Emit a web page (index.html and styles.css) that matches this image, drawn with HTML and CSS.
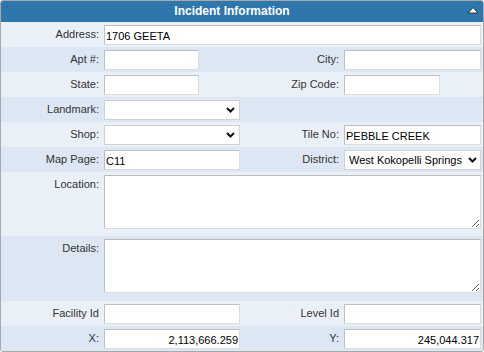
FILE: index.html
```html
<!DOCTYPE html>
<html>
<head>
<meta charset="utf-8">
<link rel="stylesheet" href="styles.css">
</head>
<body>
<div class="panel">
  <div class="header">
    <span class="title">Incident Information</span>
    <svg class="collapse" width="12" height="8" viewBox="0 0 12 8"><polygon points="1,7 6,1.5 11,7" fill="#fff" stroke="#333" stroke-width="1" stroke-linejoin="round"/></svg>
  </div>

  <div class="row light">
    <label class="lbl">Address:</label>
    <div class="cell span3"><input class="inp w377" value="1706 GEETA"></div>
  </div>

  <div class="row dark">
    <label class="lbl">Apt #:</label>
    <div class="cell"><input class="inp w95" value=""></div>
    <label class="lbl">City:</label>
    <div class="cell"><input class="inp w137" value=""></div>
  </div>

  <div class="row light">
    <label class="lbl">State:</label>
    <div class="cell"><input class="inp w95" value=""></div>
    <label class="lbl">Zip Code:</label>
    <div class="cell"><input class="inp w96" value=""></div>
  </div>

  <div class="row dark">
    <label class="lbl">Landmark:</label>
    <div class="cell">
      <div class="sel-wrap w136">
        <select class="sel"><option></option></select>
        <svg class="chev" viewBox="0 0 9 6"><path d="M1 1 L4.5 4.5 L8 1" fill="none" stroke="#111" stroke-width="2"/></svg>
      </div>
    </div>
  </div>

  <div class="row light">
    <label class="lbl">Shop:</label>
    <div class="cell">
      <div class="sel-wrap w136">
        <select class="sel"><option></option></select>
        <svg class="chev" viewBox="0 0 9 6"><path d="M1 1 L4.5 4.5 L8 1" fill="none" stroke="#111" stroke-width="2"/></svg>
      </div>
    </div>
    <label class="lbl">Tile No:</label>
    <div class="cell"><input class="inp w137" value="PEBBLE CREEK"></div>
  </div>

  <div class="row dark">
    <label class="lbl">Map Page:</label>
    <div class="cell"><input class="inp w136" value="C11"></div>
    <label class="lbl">District:</label>
    <div class="cell">
      <div class="sel-wrap w137">
        <select class="sel"><option>West Kokopelli Springs</option></select>
        <svg class="chev chev-r" viewBox="0 0 9 6"><path d="M1 1 L4.5 4.5 L8 1" fill="none" stroke="#111" stroke-width="2"/></svg>
      </div>
    </div>
  </div>

  <div class="row light tall">
    <label class="lbl">Location:</label>
    <div class="cell span3"><textarea class="area"></textarea></div>
  </div>

  <div class="row dark tall2">
    <label class="lbl">Details:</label>
    <div class="cell span3"><textarea class="area"></textarea></div>
  </div>

  <div class="row light">
    <label class="lbl">Facility Id</label>
    <div class="cell"><input class="inp w136" value=""></div>
    <label class="lbl">Level Id</label>
    <div class="cell"><input class="inp w137" value=""></div>
  </div>

  <div class="row dark">
    <label class="lbl">X:</label>
    <div class="cell"><input class="inp w136 num" value="2,113,666.259"></div>
    <label class="lbl">Y:</label>
    <div class="cell"><input class="inp w137 num" value="245,044.317"></div>
  </div>
</div>
</body>
</html>
```

FILE: styles.css
```css
* {
  box-sizing: border-box;
}

body {
  margin: 0;
  font-family: "Liberation Sans", Arial, sans-serif;
  font-size: 11px;
  color: #333;
  background: #fff;
}

.panel {
  width: 484px;
  height: 352px;
  border: 1px solid #a9a9a9;
  border-radius: 3px;
  overflow: hidden;
  background: #e9f0f8;
}

.header {
  height: 21px;
  background: #2e77ad;
  display: flex;
  align-items: center;
  color: #fff;
}

.title {
  flex: 1;
  text-align: center;
  font-weight: bold;
  font-size: 12px;
  line-height: 21px;
}

.collapse {
  flex: none;
  display: block;
  width: 12px;
  height: 8px;
  margin: 0 4px 3px 4px;
}

.row {
  display: grid;
  grid-template-columns: 103px 137px 103px 139px;
  height: 25px;
}

.row.light {
  background: #e9f0f8;
}

.row.dark {
  background: #dde7f4;
}

.row.tall {
  height: 64px;
}

.row.tall2 {
  height: 65px;
}

.lbl {
  text-align: right;
  padding: 5px 5px 0 0;
  line-height: 14px;
  white-space: nowrap;
  color: #333;
}

.cell {
  padding-top: 3px;
}

.span3 {
  grid-column: 2 / 5;
}

.inp {
  display: block;
  height: 20px;
  margin: 0;
  border: 1px solid;
  border-color: #c0c0c0 #dcdcdc #dcdcdc #c0c0c0;
  background: #fff;
  font: 11px "Liberation Sans", Arial, sans-serif;
  color: #000;
  padding: 2px 1px 0 1px;
  outline: none;
}

.num {
  text-align: right;
}

.w95 { width: 95px; }
.w96 { width: 96px; }
.w136 { width: 136px; }
.w137 { width: 137px; }
.w377 { width: 377px; }

.sel-wrap {
  position: relative;
  height: 20px;
}

.sel {
  appearance: none;
  -webkit-appearance: none;
  display: block;
  width: 100%;
  height: 20px;
  margin: 0;
  border: 1px solid #d2d2d2;
  border-radius: 0;
  background: #fff;
  font: 11px "Liberation Sans", Arial, sans-serif;
  color: #000;
  padding: 0 0 0 4px;
  outline: none;
}

.chev {
  position: absolute;
  right: 5px;
  top: 7px;
  width: 9px;
  height: 6px;
  pointer-events: none;
}

.chev-r {
  right: 4px;
}

.area {
  display: block;
  width: 377px;
  height: 54px;
  margin: 0;
  border: 1px solid;
  border-color: #bcbcbc #dcdcdc #dcdcdc #bcbcbc;
  background: #fff;
  font: 11px "Liberation Sans", Arial, sans-serif;
  padding: 2px;
  outline: none;
  resize: both;
}
```
